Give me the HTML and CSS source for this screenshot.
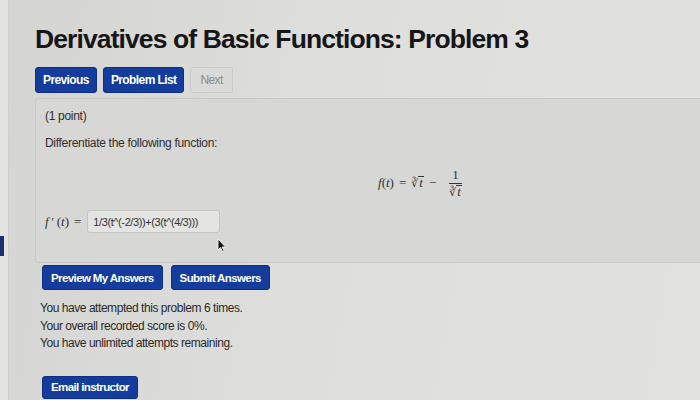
FILE: index.html
```html
<!DOCTYPE html>
<html lang="en">
<head>
    <meta charset="UTF-8">
    <meta name="viewport" content="width=device-width, initial-scale=1.0">
    <title>Derivatives of Basic Functions: Problem 3</title>
    <link rel="stylesheet" href="styles.css">
</head>
<body>
    <div class="edge"><span class="edge-mark"></span></div>
    <div class="page">
        <h1>Derivatives of Basic Functions: Problem 3</h1>

        <div class="nav">
            <button class="btn">Previous</button>
            <button class="btn">Problem List</button>
            <button class="btn disabled">Next</button>
        </div>

        <div class="problem">
            <p class="points">(1 point)</p>
            <p class="prompt">Differentiate the following function:</p>

            <div class="display-math">
                <span class="math"><i>f</i>(<i>t</i>)<span class="op">=</span><span class="root">∛<span class="radicand"><i>t</i></span></span><span class="op">−</span><span class="frac"><span class="num">1</span><span class="den"><span class="root">∛<span class="radicand"><i>t</i></span></span></span></span></span>
            </div>

            <div class="answer-row">
                <span class="math"><i>f</i>&thinsp;′&thinsp;(<i>t</i>)<span class="op">=</span></span>
                <input type="text" class="answer" value="1/3(t^(-2/3))+(3(t^(4/3)))">
            </div>

            <svg class="cursor" width="9" height="14" viewBox="0 0 9 14">
                <path d="M1 1 L1 12 L3.5 9.5 L5.5 13.5 L7 12.8 L5 9 L8.5 9 Z" fill="#111" stroke="#fff" stroke-width="0.8"/>
            </svg>
        </div>

        <div class="actions">
            <button class="btn btn-big">Preview My Answers</button>
            <button class="btn btn-big">Submit Answers</button>
        </div>

        <div class="status">
            You have attempted this problem 6 times.<br>
            Your overall recorded score is 0%.<br>
            You have unlimited attempts remaining.
        </div>

        <button class="btn email">Email instructor</button>
    </div>
</body>
</html>
```

FILE: styles.css
```css
* {
    box-sizing: border-box;
}

html, body {
    margin: 0;
    height: 100%;
    overflow: hidden;
}

body {
    background: linear-gradient(100deg, #d4d4d2 0%, #dededc 45%, #e2e2e0 100%);
    font-family: "Liberation Sans", Arial, sans-serif;
    color: #2a2a2a;
    position: relative;
}

.edge {
    position: absolute;
    left: 0;
    top: 0;
    bottom: 0;
    width: 9px;
    background: #e3e3e2;
    border-right: 1px solid #cfcfcd;
}

.edge-mark {
    position: absolute;
    left: 0;
    top: 236px;
    width: 4px;
    height: 20px;
    background: #1b2f6e;
}

.page {
    padding: 20px 0 0 35px;
}

h1 {
    margin: 0;
    font-size: 26.5px;
    font-weight: bold;
    letter-spacing: -0.9px;
    color: #161616;
    line-height: 38px;
}

.nav {
    display: flex;
    gap: 6px;
    margin-top: 9px;
}

.btn {
    font-family: "Liberation Sans", Arial, sans-serif;
    background: #143c9c;
    color: #fff;
    border: 1px solid #0e2f80;
    border-radius: 3px;
    font-size: 12px;
    font-weight: bold;
    letter-spacing: -0.6px;
    padding: 0 7px;
    height: 26px;
    cursor: pointer;
}

.btn.disabled {
    background: #dadad8;
    border-color: #cacac8;
    color: #8a8a8a;
    font-weight: normal;
    padding: 0 9px;
}

.problem {
    position: relative;
    margin-top: 5px;
    background: #d7d7d5;
    border: 1px solid #c9c9c7;
    border-right: none;
    border-radius: 3px 0 0 3px;
    padding: 10px 9px 30px;
    height: 165px;
}

.points, .prompt {
    margin: 0;
    font-size: 12px;
    letter-spacing: -0.3px;
    color: #2e2e2e;
}

.prompt {
    margin-top: 13px;
}

.display-math {
    padding-left: 333px;
    margin-top: 18px;
    height: 40px;
}

.math {
    font-family: "Liberation Serif", "DejaVu Serif", serif;
    font-size: 13px;
    color: #333;
    white-space: nowrap;
}

.op {
    margin: 0 5px;
}

.root {
    display: inline-block;
    font-family: "DejaVu Serif", serif;
    font-size: 11px;
}

.radicand {
    display: inline-block;
    border-top: 1px solid #333;
    padding: 0 1px;
    line-height: 12px;
    font-family: "Liberation Serif", serif;
    font-size: 13px;
}

.frac {
    display: inline-block;
    vertical-align: middle;
    text-align: center;
    margin-left: 8px;
    line-height: 14px;
}

.num {
    display: block;
    padding: 0 3px 1px;
    border-bottom: 1px solid #333;
}

.den {
    display: block;
    padding-top: 1px;
}

.answer-row {
    display: flex;
    align-items: center;
    gap: 1px;
    margin-top: 2px;
}

.answer {
    width: 133px;
    height: 23px;
    background: #e4e4e2;
    border: 1px solid #c4c4c2;
    border-radius: 3px;
    font-family: "Liberation Sans", Arial, sans-serif;
    font-size: 11px;
    letter-spacing: -0.4px;
    color: #333;
    padding: 0 5px;
}

.cursor {
    position: absolute;
    left: 181px;
    top: 139px;
}

.actions {
    display: flex;
    gap: 8px;
    margin-top: 2px;
    padding-left: 7px;
}

.btn-big {
    height: 25px;
    font-size: 11.5px;
    padding: 0 8px;
}

.status {
    margin-top: 10px;
    padding-left: 5px;
    font-size: 12px;
    line-height: 17.5px;
    letter-spacing: -0.45px;
    color: #2a2a2a;
}

.email {
    margin-top: 23px;
    margin-left: 7px;
    height: 23px;
    font-size: 11.5px;
    padding: 0 8px;
}
```
